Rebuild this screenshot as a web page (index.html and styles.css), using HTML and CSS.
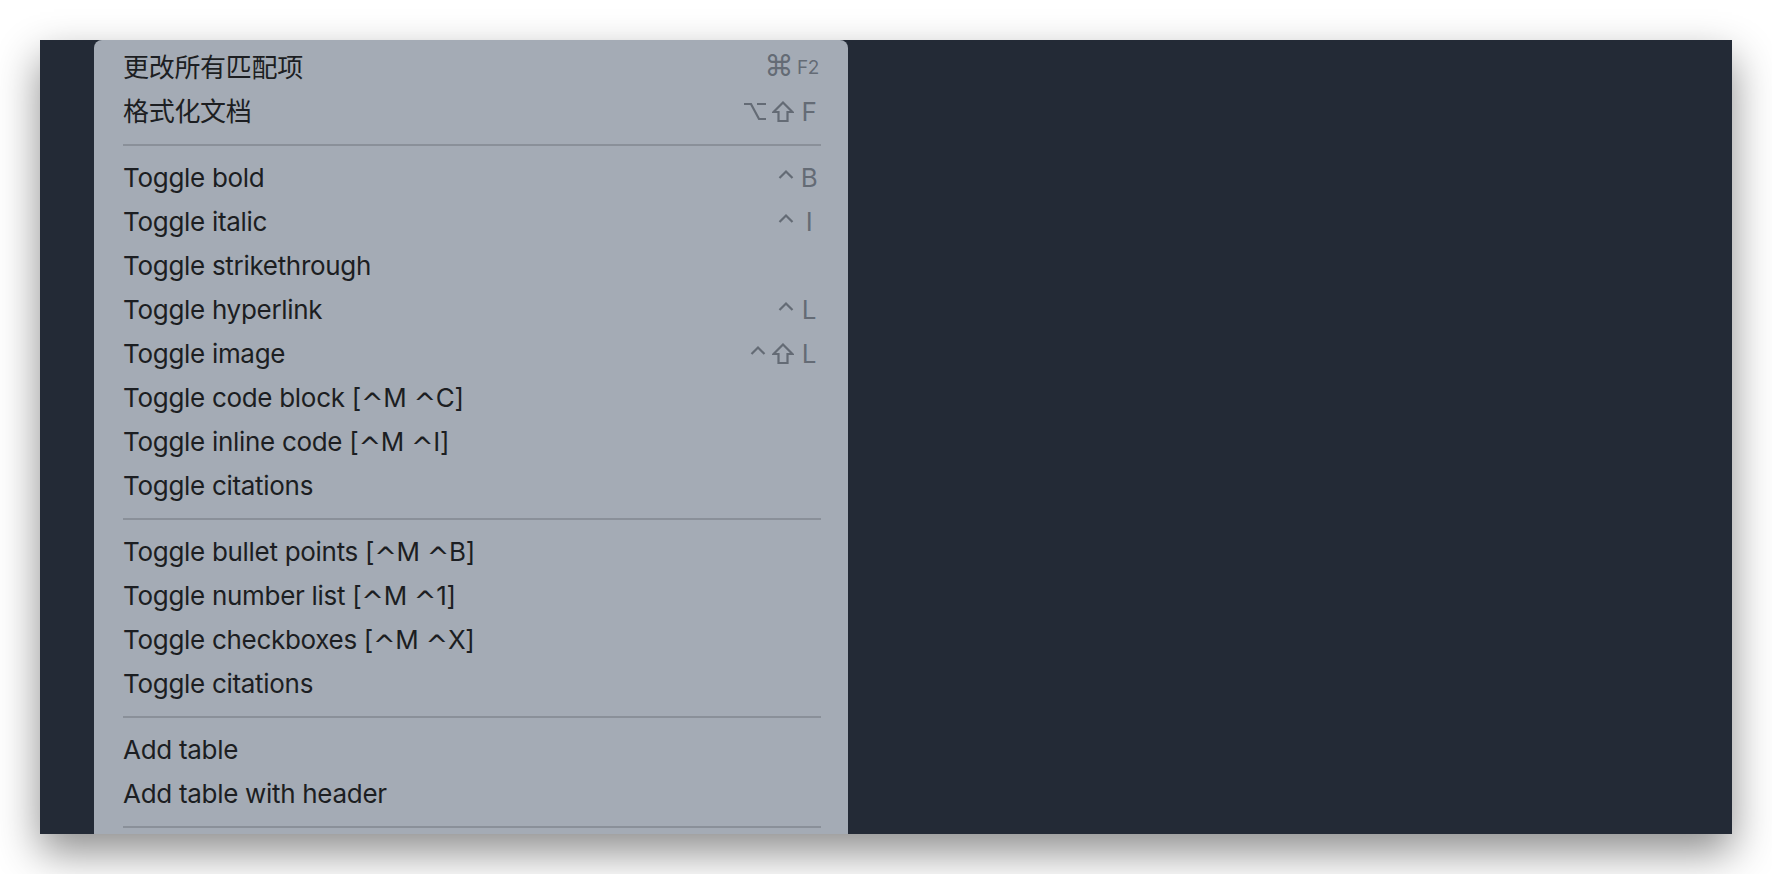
FILE: index.html
```html
<!DOCTYPE html>
<html lang="zh-CN">
<head>
    <meta charset="UTF-8">
    <title>Context Menu</title>
    <link rel="stylesheet" href="styles.css">
</head>
<body>
    <div class="window">
        <div class="menu">
            <div class="item">
                <span class="label">更改所有匹配项</span>
                <span class="keys"><span class="cmd">⌘</span><span class="key small">F2</span></span>
            </div>
            <div class="item">
                <span class="label">格式化文档</span>
                <span class="keys">
                    <svg class="mod opt" width="22" height="19" viewBox="0 0 22 19"><path d="M0 2H7L15 17H22M13 2H22"/></svg>
                    <svg class="mod shift" width="22" height="21" viewBox="0 0 22 21"><path d="M11 1.5L20.5 11H15.5V20H6.5V11H1.5Z"/></svg>
                    <span class="key">F</span>
                </span>
            </div>
            <div class="sep"></div>
            <div class="item">
                <span class="label">Toggle bold</span>
                <span class="keys">
                    <svg class="mod ctrl" width="16" height="10" viewBox="0 0 16 10"><path d="M1.5 9L8 2.5L14.5 9"/></svg>
                    <span class="key">B</span>
                </span>
            </div>
            <div class="item">
                <span class="label">Toggle italic</span>
                <span class="keys">
                    <svg class="mod ctrl" width="16" height="10" viewBox="0 0 16 10"><path d="M1.5 9L8 2.5L14.5 9"/></svg>
                    <span class="key">I</span>
                </span>
            </div>
            <div class="item"><span class="label">Toggle strikethrough</span></div>
            <div class="item">
                <span class="label">Toggle hyperlink</span>
                <span class="keys">
                    <svg class="mod ctrl" width="16" height="10" viewBox="0 0 16 10"><path d="M1.5 9L8 2.5L14.5 9"/></svg>
                    <span class="key">L</span>
                </span>
            </div>
            <div class="item">
                <span class="label">Toggle image</span>
                <span class="keys">
                    <svg class="mod ctrl" width="16" height="10" viewBox="0 0 16 10"><path d="M1.5 9L8 2.5L14.5 9"/></svg>
                    <svg class="mod shift" width="22" height="21" viewBox="0 0 22 21"><path d="M11 1.5L20.5 11H15.5V20H6.5V11H1.5Z"/></svg>
                    <span class="key">L</span>
                </span>
            </div>
            <div class="item"><span class="label">Toggle code block [<i>^</i>M <i>^</i>C]</span></div>
            <div class="item"><span class="label">Toggle inline code [<i>^</i>M <i>^</i>I]</span></div>
            <div class="item"><span class="label">Toggle citations</span></div>
            <div class="sep"></div>
            <div class="item"><span class="label">Toggle bullet points [<i>^</i>M <i>^</i>B]</span></div>
            <div class="item"><span class="label">Toggle number list [<i>^</i>M <i>^</i>1]</span></div>
            <div class="item"><span class="label">Toggle checkboxes [<i>^</i>M <i>^</i>X]</span></div>
            <div class="item"><span class="label">Toggle citations</span></div>
            <div class="sep"></div>
            <div class="item"><span class="label">Add table</span></div>
            <div class="item"><span class="label">Add table with header</span></div>
            <div class="sep"></div>
        </div>
    </div>
</body>
</html>
```

FILE: styles.css
```css
body {
    margin: 0;
    padding: 40px;
    background-color: #fff;
    font-family: Inter, "Noto Sans CJK SC", sans-serif;
}
.window {
    position: relative;
    height: 794px;
    background-color: #232a36;
    overflow: hidden;
    box-shadow: 0 18px 40px rgba(0,0,0,0.45);
}
.menu {
    position: absolute;
    left: 54px;
    top: 0;
    width: 698px;
    height: 800px;
    padding: 6px 27px 0 29px;
    background-color: #a4abb5;
    border-radius: 8px 8px 0 0;
}
.item {
    display: flex;
    justify-content: space-between;
    align-items: center;
    height: 44px;
    line-height: 44px;
    font-size: 26px;
    letter-spacing: -0.3px;
    color: #1c1e22;
}
.label {
    white-space: nowrap;
}
.label i {
    font-style: normal;
    font-family: "DejaVu Sans", sans-serif;
    font-size: 27px;
    line-height: 1;
    vertical-align: -5px;
}
.keys {
    display: flex;
    align-items: center;
    gap: 6px;
    color: #646b75;
}
.mod {
    display: block;
    fill: none;
    stroke: currentColor;
    stroke-width: 2.2;
    stroke-linejoin: miter;
}
.mod.ctrl {
    margin-bottom: 9px;
}
.mod.shift,
.mod.opt {
    margin-top: -2px;
}
.cmd {
    font-family: "DejaVu Sans", sans-serif;
    font-size: 29px;
    line-height: 1;
    margin-top: -3px;
}
.key {
    width: 24px;
    margin-left: -3px;
    text-align: center;
    font-size: 26px;
}
.key.small {
    font-size: 19px;
    width: 26px;
    margin-left: -4px;
}
.sep {
    height: 2px;
    margin: 10px 0;
    background-color: #8a9099;
}
```
